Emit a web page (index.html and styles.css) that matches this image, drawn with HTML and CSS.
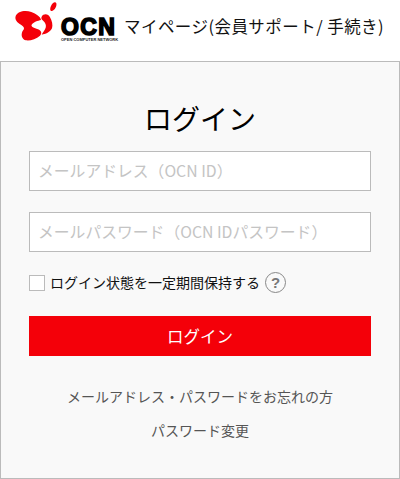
FILE: index.html
```html
<!DOCTYPE html>
<html lang="ja">
<head>
<meta charset="utf-8">
<title>ログイン</title>
<link rel="stylesheet" href="styles.css">
</head>
<body>
<header class="header">
  <svg class="mark" width="50" height="45" viewBox="0 0 150 135">
    <path fill="#f40009" d="M17 48C22 34 46 29 64 36C78 42 92 50 93 60C84 62 70 66 65 74C62 80 72 83 84 88C94 92 97 100 90 107C78 118 60 123 47 121C33 117 32 100 40 90C46 82 38 77 28 71C18 65 14 56 17 48Z"/>
    <path fill="#f40009" d="M95 50C100 40 115 40 120 52C126 62 129 76 126 85C121 96 106 103 95 104C98 96 104 92 107 83C110 74 104 66 98 61C94 57 93 54 95 50Z"/>
    <path fill="#f40009" d="M123 18C127 7 137 3 139 10C141 18 135 31 126 33C119 34 120 24 123 18Z"/>
  </svg>
  <div class="brand">
    <span class="brand-name">OCN</span>
    <span class="brand-sub">OPEN COMPUTER NETWORK</span>
  </div>
  <span class="page-name">マイページ(会員サポート/ 手続き)</span>
</header>
<main class="panel">
  <h1 class="title">ログイン</h1>
  <form class="form">
    <input class="field" type="text" placeholder="メールアドレス（OCN ID）">
    <input class="field second" type="password" placeholder="メールパスワード（OCN IDパスワード）">
    <div class="keep">
      <span class="check"></span>
      <span class="keep-label">ログイン状態を一定期間保持する</span>
      <span class="help">?</span>
    </div>
    <button class="submit" type="button">ログイン</button>
  </form>
  <a class="link first" href="#">メールアドレス・パスワードをお忘れの方</a>
  <a class="link" href="#">パスワード変更</a>
</main>
</body>
</html>
```
FILE: styles.css
```css
* { box-sizing: border-box; }
html, body { margin: 0; padding: 0; background: #fff; }
body {
  width: 400px;
  height: 479px;
  overflow: hidden;
  font-family: "Noto Sans CJK JP", "Liberation Sans", sans-serif;
  color: #111;
}
.header {
  height: 61px;
  display: flex;
  align-items: flex-start;
  padding-left: 10px;
}
.mark { flex: none; margin-right: 1px; }
.brand {
  width: 58px;
  margin-top: 17px;
  display: flex;
  flex-direction: column;
}
.brand-name {
  font: 700 23px/20px "Liberation Sans", sans-serif;
  -webkit-text-stroke: 1.600px #000;
  letter-spacing: 1.400px;
  color: #000;
  white-space: nowrap;
}
.brand-sub {
  font: 700 4px/5px "Liberation Sans", sans-serif;
  white-space: nowrap;
  color: #222;
}
.page-name {
  margin: 14px 0 0 5px;
  font-size: 16.500px;
  letter-spacing: 0.450px;
  line-height: 24px;
  white-space: nowrap;
}
.panel {
  height: 418px;
  border: 1px solid #bbb;
  background: #f9f9f9;
  padding: 0 28px;
  display: flex;
  flex-direction: column;
  align-items: center;
}
.title {
  margin: 36px 0 0;
  font-size: 28px;
  line-height: 40px;
  font-weight: 400;
  color: #000;
}
.form { width: 342px; margin-top: 13px; display: flex; flex-direction: column; }
.field {
  height: 40px;
  width: 100%;
  margin-bottom: 21px;
  border: 1px solid #bbb;
  background: #fff;
  padding: 0 8px 2px;
  font: 15.800px "Noto Sans CJK JP", "Liberation Sans", sans-serif;
  outline: none;
}
.field.second { margin-bottom: 19px; }
.field::placeholder { color: #c4c4c4; opacity: 1; }
.keep { display: flex; align-items: center; height: 24px; }
.check { width: 16px; height: 16px; border: 1px solid #bbb; background: #fff; margin-right: 5px; }
.keep-label { font-size: 14px; line-height: 22px; white-space: nowrap; margin-bottom: 2px; }
.help {
  width: 21px;
  height: 21px;
  margin: 0 0 2px 5px;
  border: 1.500px solid #888;
  border-radius: 50%;
  display: flex;
  align-items: center;
  justify-content: center;
  font: 700 15px/1 "Liberation Sans", sans-serif;
  color: #777;
}
.submit {
  height: 40px;
  margin-top: 21px;
  border: 0;
  background: #f40009;
  color: #fff;
  font: 16.500px "Noto Sans CJK JP", "Liberation Sans", sans-serif;
}
.link {
  font-size: 14px;
  line-height: 20px;
  color: #555;
  text-decoration: none;
  margin-top: 14px;
}
.link.first { margin-top: 30px; }
```
